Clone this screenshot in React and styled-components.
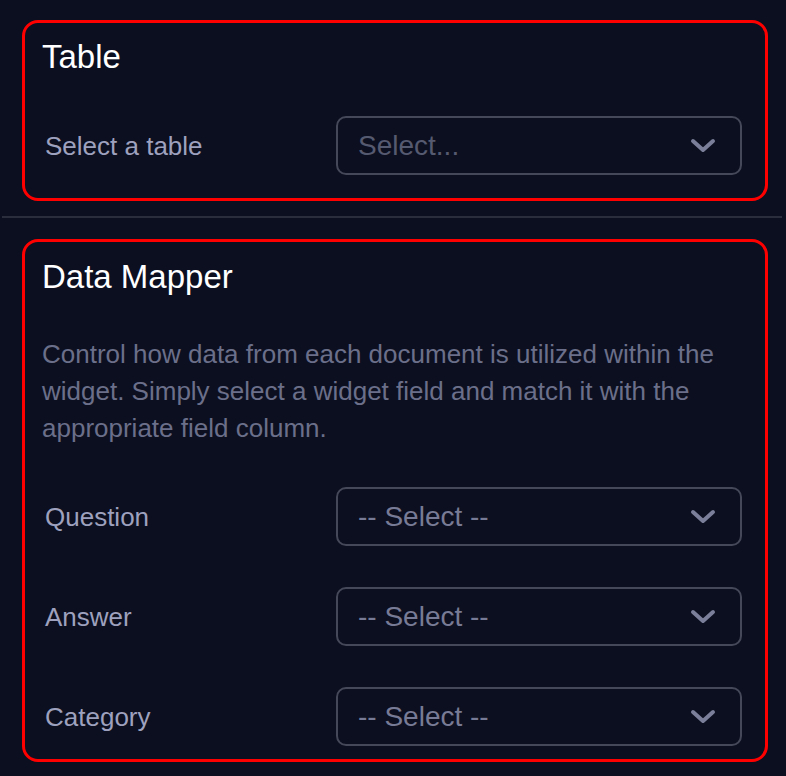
import React from 'react';
import styled, { createGlobalStyle } from 'styled-components';

const GlobalStyle = createGlobalStyle`
  html, body {
    margin: 0;
    padding: 0;
    background: #0c0f1f;
  }
  body {
    font-family: "Liberation Sans", Arial, Helvetica, sans-serif;
  }
`;

const Page = styled.div`
  min-height: 776px;
  box-sizing: border-box;
  padding: 20px 4px 0 2px;
  background: #0c0f1f;
`;

const Section = styled.section`
  margin: 0 14px 0 20px;
  border: 3px solid #ff0000;
  border-radius: 16px;
  padding: ${(props) => (props.compact ? '13px 23px 13px 17px' : '12px 23px 23px 17px')};
  display: flex;
  flex-direction: column;
  gap: 41px;
`;

const Title = styled.h2`
  margin: 2px 0 -2px;
  font-size: 33px;
  line-height: 40px;
  font-weight: 400;
  color: #ffffff;
`;

const Description = styled.p`
  margin: 0 0 -1px;
  font-size: 26px;
  line-height: 37px;
  color: #6b6f8a;
`;

const Divider = styled.hr`
  margin: 15px 0 21px;
  border: 0;
  height: 2px;
  background: #2a2d3c;
`;

const Row = styled.div`
  display: grid;
  grid-template-columns: 294px 1fr;
  align-items: center;
`;

const Label = styled.label`
  padding-left: 3px;
  font-size: 26px;
  line-height: 30px;
  color: #9ea1be;
`;

const SelectBox = styled.div`
  height: 59px;
  box-sizing: border-box;
  border: 2px solid #454859;
  border-radius: 10px;
  padding: 0 24px 0 20px;
  display: flex;
  align-items: center;
  justify-content: space-between;
`;

const SelectText = styled.span`
  font-size: 28px;
  color: ${(props) => (props.dim ? '#565a70' : '#787b95')};
`;

const Chevron = () => (
  <svg width="26" height="15" viewBox="0 0 26 15" fill="none">
    <polyline
      points="3,3 13,12 23,3"
      stroke="#7b7f99"
      strokeWidth="4"
      strokeLinecap="round"
      strokeLinejoin="round"
    />
  </svg>
);

const Select = ({ placeholder, dim }) => (
  <SelectBox>
    <SelectText dim={dim}>{placeholder}</SelectText>
    <Chevron />
  </SelectBox>
);

const fields = ['Question', 'Answer', 'Category'];

export default function App() {
  return (
    <Page>
      <GlobalStyle />
      <Section>
        <Title>Table</Title>
        <Row>
          <Label>Select a table</Label>
          <Select placeholder="Select..." dim />
        </Row>
      </Section>
      <Divider />
      <Section compact>
        <Title>Data Mapper</Title>
        <Description>
          Control how data from each document is utilized within the widget. Simply select a widget
          field and match it with the appropriate field column.
        </Description>
        {fields.map((f) => (
          <Row key={f}>
            <Label>{f}</Label>
            <Select placeholder="-- Select --" />
          </Row>
        ))}
      </Section>
    </Page>
  );
}
